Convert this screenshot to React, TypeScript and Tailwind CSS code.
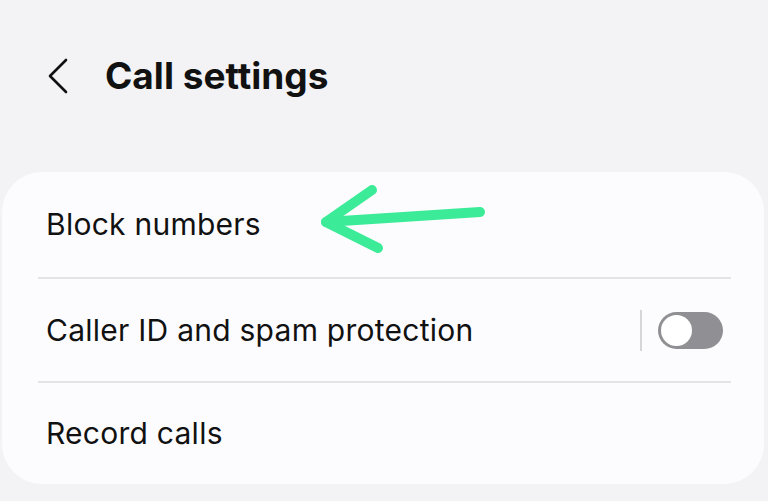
function Divider() {
  return <div className="ml-[36px] mr-[33px] h-[2px] bg-[#e4e4e7]" />;
}

export default function App() {
  return (
    <div className="relative flex h-[501px] w-[768px] flex-col overflow-hidden bg-[#f3f3f5] font-['Inter',sans-serif] text-[#111]">
      <header className="flex h-[152px] items-start pt-[52px]">
        <div className="flex h-[48px] items-center">
          <svg className="ml-[46px]" width="24" height="38" viewBox="0 0 24 38" fill="none" stroke="#111" strokeWidth="2.6" strokeLinecap="round" strokeLinejoin="round">
            <path d="M20 3 L4 19 L20 35" />
          </svg>
          <h1 className="ml-[35px] text-[37px] font-bold tracking-[0px]">Call settings</h1>
        </div>
      </header>

      <section className="mx-[2px] mt-[20px] w-[762px] rounded-[40px] bg-[#fcfcfe] text-[30px] tracking-[0.25px]">
        <div className="flex h-[105px] items-center pl-[44px]">Block numbers</div>
        <Divider />
        <div className="flex h-[102px] items-center pl-[44px] pr-[41px]">
          <span className="flex-1">Caller ID and spam protection</span>
          <div className="h-[41px] w-[2px] bg-[#d6d6d9]" />
          <div className="ml-[16px] flex h-[37px] w-[65px] items-center rounded-full bg-[#909094] pl-[3px]">
            <div className="h-[31px] w-[31px] rounded-full bg-white" />
          </div>
        </div>
        <Divider />
        <div className="flex h-[101px] items-center pl-[44px]">Record calls</div>
      </section>

      <svg
        className="absolute left-0 top-0"
        width="768"
        height="501"
        viewBox="0 0 768 501"
        fill="none"
        stroke="#3ceb98"
        strokeWidth="10"
        strokeLinecap="round"
        strokeLinejoin="round"
      >
        <path d="M480 212 L326 222" />
        <path d="M372 190 L326 222 L378 248" />
      </svg>
    </div>
  );
}
